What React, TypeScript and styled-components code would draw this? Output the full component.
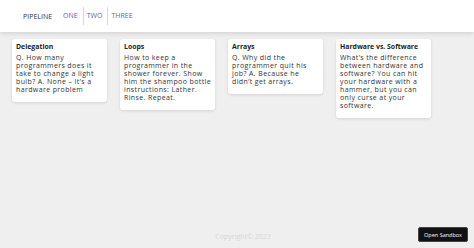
import styled, { createGlobalStyle } from 'styled-components'

const GlobalStyle = createGlobalStyle`
  html, body {
    margin: 0;
    padding: 0;
    background: #efefef;
    font-family: "Open Sans", "DejaVu Sans", sans-serif;
  }
`

const jokes = [
  {
    title: 'Delegation',
    body: 'Q. How many programmers does it take to change a light bulb? A. None – It’s a hardware problem'
  },
  {
    title: 'Loops',
    body: 'How to keep a programmer in the shower forever. Show him the shampoo bottle instructions: Lather. Rinse. Repeat.'
  },
  {
    title: 'Arrays',
    body: 'Q. Why did the programmer quit his job? A. Because he didn’t get arrays.'
  },
  {
    title: 'Hardware vs. Software',
    body: 'What’s the difference between hardware and software? You can hit your hardware with a hammer, but you can only curse at your software.'
  }
]

export default function App() {
  return (
    <>
      <GlobalStyle />
      <Page>
        <Header>
          <Brand>PIPELINE</Brand>
          <Nav>
            <NavLink>ONE</NavLink>
            <NavLink divided>TWO</NavLink>
            <NavLink divided>THREE</NavLink>
          </Nav>
        </Header>
        <Board>
          {jokes.map((j) => (
            <Card key={j.title}>
              <CardTitle>{j.title}</CardTitle>
              <CardBody>{j.body}</CardBody>
            </Card>
          ))}
        </Board>
        <Footer>
          <Copyright>Copyright© 2023</Copyright>
        </Footer>
        <SandboxButton>Open Sandbox</SandboxButton>
      </Page>
    </>
  )
}

const Page = styled.div`
  position: relative;
  height: 248px;
  display: flex;
  flex-direction: column;
  overflow: hidden;
`

const Header = styled.header`
  flex: 0 0 32px;
  background: #fff;
  display: flex;
  align-items: center;
  padding: 0 0 0 23px;
  box-shadow: 0 1px 5px rgba(0, 0, 0, 0.15);
  font-size: 7px;
`

const Brand = styled.div`
  color: #333;
  margin-right: 8px;
`

const Nav = styled.nav`
  display: flex;
  align-items: center;
`

const NavLink = styled.a<{ divided?: boolean }>`
  color: #5b63b5;
  padding: 2px 3px;
  line-height: 14px;
  border-left: ${(p) => (p.divided ? '1px solid #d8d8e4' : 'none')};
  margin-left: ${(p) => (p.divided ? '2px' : '0')};
`

const Board = styled.main`
  flex: 1;
  display: flex;
  align-items: flex-start;
  gap: 13px;
  padding: 7px 12px 0;
`

const Card = styled.div`
  width: 95px;
  box-sizing: border-box;
  background: #fff;
  border-radius: 3px;
  box-shadow: 0 1px 3px rgba(0, 0, 0, 0.12);
  padding: 3px 4px 8px 4px;
`

const CardTitle = styled.div`
  font-size: 6.9px;
  font-weight: 700;
  color: #222;
  line-height: 9px;
  white-space: nowrap;
  margin-bottom: 3px;
`

const CardBody = styled.div`
  font-size: 7px;
  color: #333;
  line-height: 8px;
  letter-spacing: 0.38px;
`

const Footer = styled.footer`
  flex: 0 0 24px;
  display: flex;
  align-items: center;
  justify-content: center;
  padding-left: 12px;
`

const Copyright = styled.div`
  font-size: 7px;
  color: #d6d6d6;
`

const SandboxButton = styled.button`
  position: absolute;
  right: 6px;
  bottom: 6px;
  background: #111;
  color: #fff;
  border: 1px solid #444;
  border-radius: 2px;
  font-family: "Open Sans", sans-serif;
  font-size: 5.5px;
  padding: 3px 5px;
  height: 15px;
`
